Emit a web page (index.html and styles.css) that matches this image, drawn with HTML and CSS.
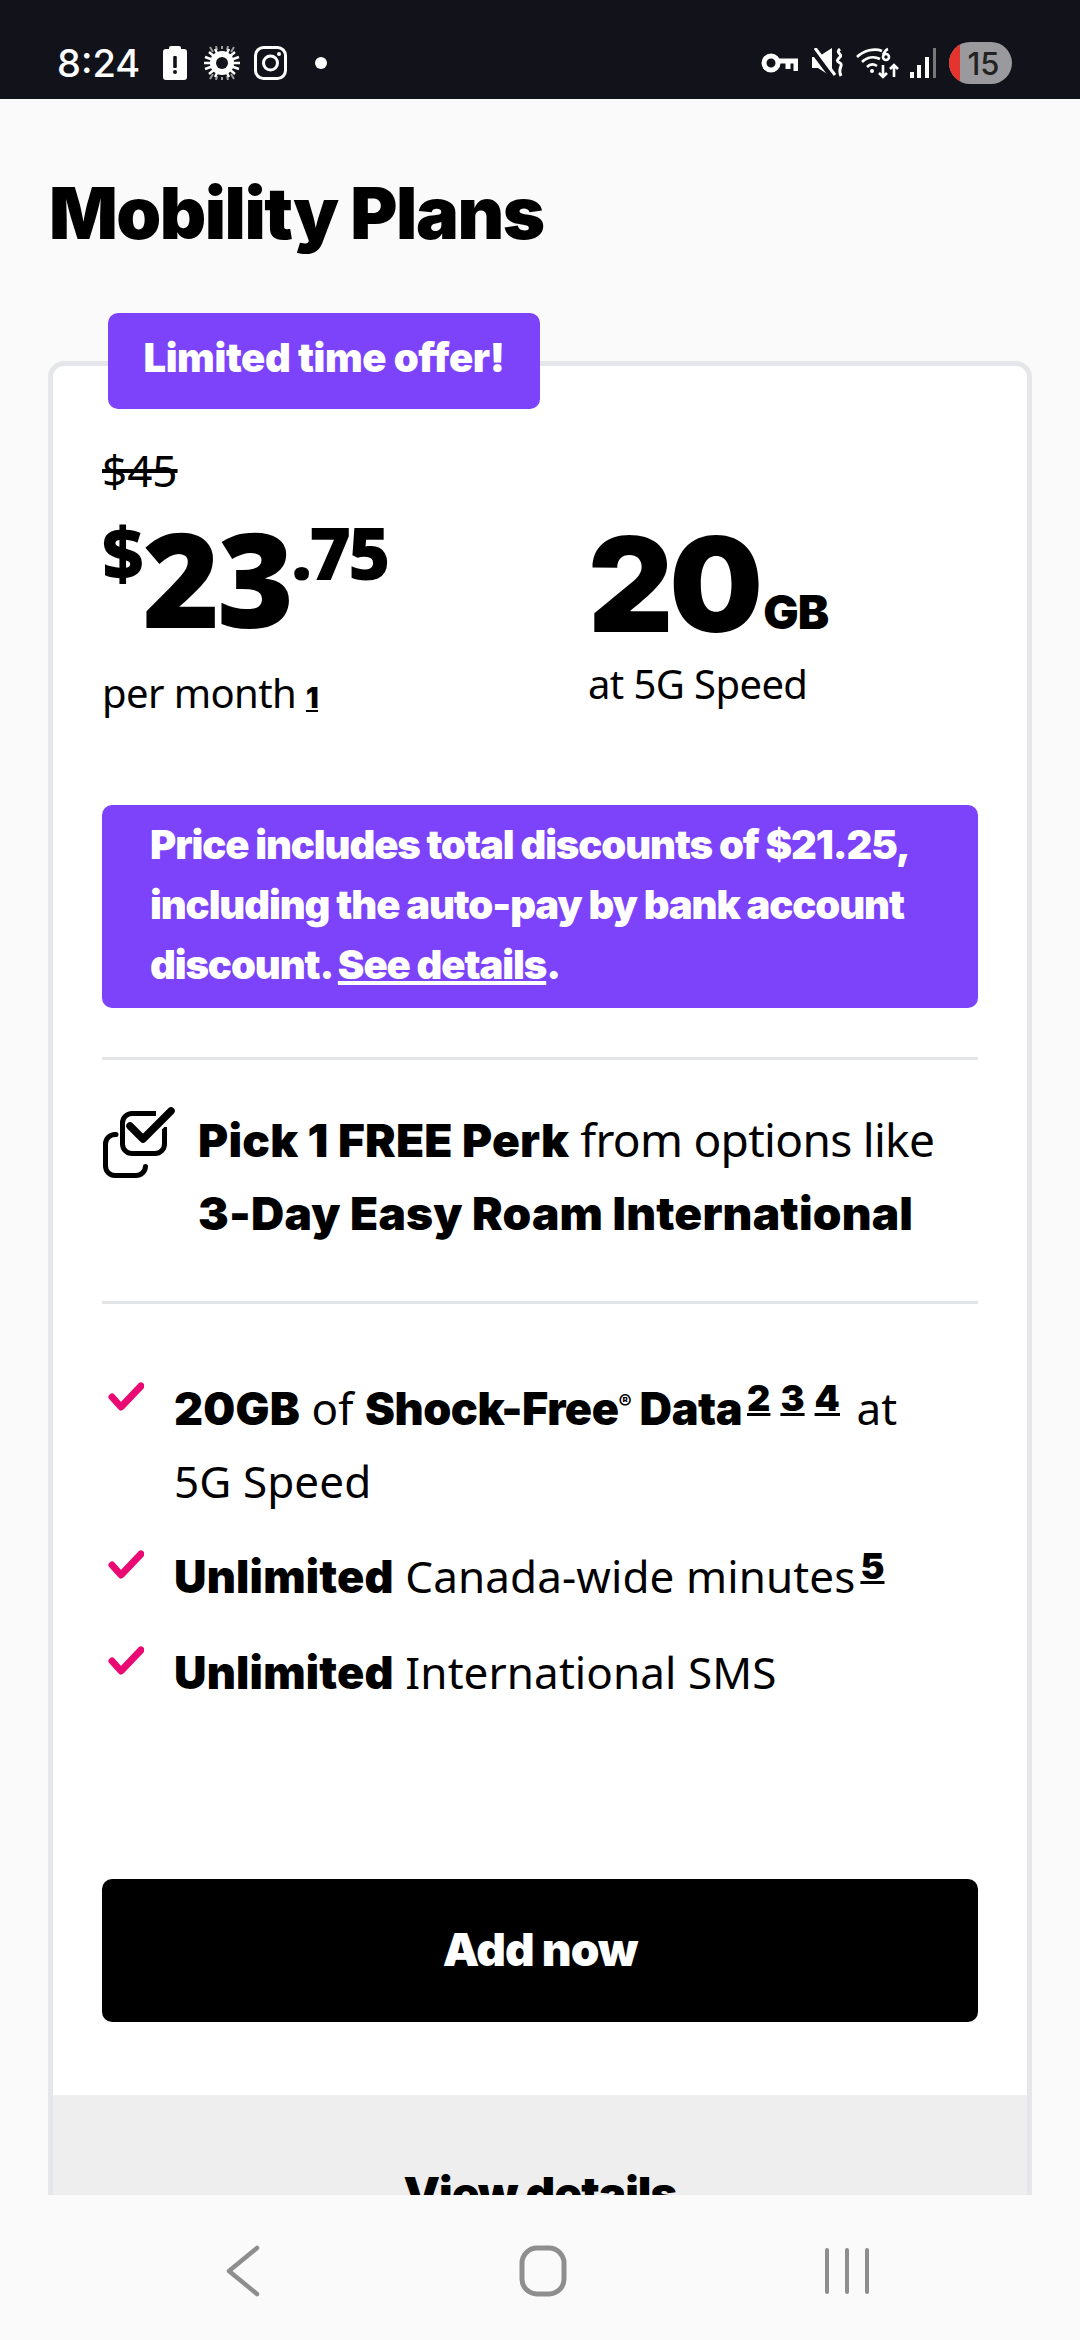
FILE: index.html
```html
<!DOCTYPE html>
<html lang="en">
<head>
    <meta charset="UTF-8">
    <meta name="viewport" content="width=device-width, initial-scale=1.0">
    <title>Mobility Plans</title>
    <link rel="stylesheet" href="styles.css">
</head>
<body>
<div class="screen">
    <div class="status-bar">
        <div class="status-left">
            <span class="clock">8:24</span>
            <svg class="ic-battery" width="24" height="34" viewBox="0 0 24 34"><path fill="#fff" d="M8 0h8a2 2 0 0 1 2 2v1h3a3 3 0 0 1 3 3v25a3 3 0 0 1-3 3H3a3 3 0 0 1-3-3V6a3 3 0 0 1 3-3h3V2a2 2 0 0 1 2-2z"/><rect x="10.2" y="10" width="3.6" height="12" rx="1" fill="#12131a"/><circle cx="12" cy="26" r="2" fill="#12131a"/></svg>
            <svg class="ic-sun" width="36" height="34" viewBox="0 0 36 34">
                <g stroke="#9b9b9b" stroke-width="2"><path d="M6 1l3 5M12 0l1 4M24 0l-1 4M30 1l-3 5M6 33l3-5M12 34l1-4M24 34l-1-4M30 33l-3-5M18 0v3M18 31v3"/></g>
                <g stroke="#fff" stroke-width="2.4"><path d="M0 17h36M1 11l34 12M1 23l34-12M5 6l26 22M5 28l26-22M11 3l14 28M11 31l14-28"/></g>
                <circle cx="18" cy="17" r="12" fill="#fff"/><circle cx="18" cy="17" r="6" fill="#12131a"/>
            </svg>
            <svg class="ic-insta" width="33" height="34" viewBox="0 0 33 34"><rect x="1.5" y="1.5" width="30" height="31" rx="8" fill="none" stroke="#fff" stroke-width="3"/><circle cx="16.5" cy="17" r="7" fill="none" stroke="#fff" stroke-width="3"/><circle cx="25" cy="8" r="2" fill="#fff"/></svg>
            <span class="dot"></span>
        </div>
        <div class="status-right">
            <svg class="ic-key" width="37" height="20" viewBox="0 0 37 20"><path fill="none" stroke="#fff" stroke-width="5" d="M17 8h18v10M27 8v8"/><circle cx="10" cy="10" r="7" fill="none" stroke="#fff" stroke-width="5"/></svg>
            <svg class="ic-mute" width="31" height="30" viewBox="0 0 31 30"><path fill="#fff" d="M0 9h6l14-9v29L6 20H0z"/><path d="M0 2l20 27" stroke="#12131a" stroke-width="5"/><path d="M3 0l20 27" stroke="#fff" stroke-width="3"/><path fill="none" stroke="#fff" stroke-width="3" d="M28 1c-5 4 3 5 0 8s-4 4 0 6-3 5 1 13"/></svg>
            <svg class="ic-wifi" width="44" height="32" viewBox="0 0 44 32"><g fill="none" stroke="#fff" stroke-width="2.600"><path d="M1 10c7-7 18-9 25-6M6 15c5-5 12-6 18-3M11 20c3-3 7-3 10-1"/><path d="M27 8c1-2 2-5 5-6M33 10a3 3 0 1 1-6 0 3 3 0 0 1 6 0z"/><path d="M27 18v12M23 26l4 4 4-4M38 30V18M34 22l4-4 4 4"/></g><circle cx="16" cy="24" r="2" fill="#fff"/></svg>
            <svg class="ic-signal" width="27" height="30" viewBox="0 0 27 30"><rect x="0" y="24" width="4" height="6" fill="#fff"/><rect x="7" y="17" width="4" height="13" fill="#fff"/><rect x="15" y="9" width="4" height="21" fill="#fff"/><rect x="23" y="0" width="3" height="30" fill="#77777a"/></svg>
            <span class="battery-pill"><span class="battery-level"></span><span class="battery-num">15</span></span>
        </div>
    </div>

    <main class="page">
        <h1>Mobility Plans</h1>
        <section class="plan-card">
            <div class="offer-badge">Limited time offer!</div>
            <div class="plan-body">
                <div class="figures">
                    <div class="price-col">
                        <div class="old-price">$45</div>
                        <div class="big-figure price-figure"><span class="currency">$</span>23<span class="cents">.75</span></div>
                        <div class="under-text">per month <a class="note" href="#">1</a></div>
                    </div>
                    <div class="data-col">
                        <div class="big-figure">20<span class="unit">GB</span></div>
                        <div class="under-text">at 5G Speed</div>
                    </div>
                </div>
                <div class="discount-box">
                    Price includes total discounts of $21.25, including the auto-pay by bank account discount. <a href="#">See details</a>.
                </div>
                <div class="perk-row">
                    <svg class="perk-icon" width="74" height="74" viewBox="0 0 74 74">
                        <path fill="none" stroke="#000" stroke-width="5" stroke-linecap="round" d="M14 27.500h-1a9.500 9.500 0 0 0-9.500 9.500v22a9.500 9.500 0 0 0 9.500 9.500h21a9.500 9.500 0 0 0 9.500-9"/>
                        <path fill="none" stroke="#000" stroke-width="5" d="M54 6.500H30a9.500 9.500 0 0 0-9.500 9.500v21a9.500 9.500 0 0 0 9.500 9.500h23a9.500 9.500 0 0 0 9.500-9.500V20"/>
                        <path fill="none" stroke="#fff" stroke-width="14" d="M28 19l13 13 28-29"/>
                        <path fill="none" stroke="#000" stroke-width="7.500" stroke-linecap="round" stroke-linejoin="round" d="M28 19l13 13L69 4"/>
                    </svg>
                    <p class="perk-text"><b>Pick 1 FREE Perk</b> from options like<br><b>3-Day Easy Roam International</b></p>
                </div>
                <ul class="features">
                    <li>
                        <svg class="check" width="36" height="30" viewBox="0 0 36 30"><path fill="none" stroke="#ea0a73" stroke-width="7" stroke-linecap="round" stroke-linejoin="round" d="M4 15l9 10L33 4"/></svg>
                        <span class="feature-text"><b>20GB</b> of <b class="narrow">Shock-Free<sup class="reg">®</sup> Data</b><a class="note sup" href="#">2</a><a class="note sup" href="#">3</a><a class="note sup" href="#">4</a> at 5G Speed</span>
                    </li>
                    <li>
                        <svg class="check" width="36" height="30" viewBox="0 0 36 30"><path fill="none" stroke="#ea0a73" stroke-width="7" stroke-linecap="round" stroke-linejoin="round" d="M4 15l9 10L33 4"/></svg>
                        <span class="feature-text"><b>Unlimited</b> Canada-wide minutes<a class="note sup" href="#">5</a></span>
                    </li>
                    <li>
                        <svg class="check" width="36" height="30" viewBox="0 0 36 30"><path fill="none" stroke="#ea0a73" stroke-width="7" stroke-linecap="round" stroke-linejoin="round" d="M4 15l9 10L33 4"/></svg>
                        <span class="feature-text"><b>Unlimited</b> International SMS</span>
                    </li>
                </ul>
                <button class="add-btn">Add now</button>
            </div>
            <div class="card-footer">View details</div>
        </section>
    </main>

    <nav class="nav-bar">
        <svg width="34" height="52" viewBox="0 0 34 52"><path fill="none" stroke="#8e8e8e" stroke-width="4.500" stroke-linecap="round" stroke-linejoin="round" d="M31 3L3 26l28 23"/></svg>
        <svg width="48" height="52" viewBox="0 0 48 52"><rect x="3" y="3" width="42" height="46" rx="15" fill="none" stroke="#8e8e8e" stroke-width="5"/></svg>
        <svg width="44" height="46" viewBox="0 0 44 46"><path stroke="#8e8e8e" stroke-width="4" stroke-linecap="round" d="M2 2v42M22 2v42M42 2v42"/></svg>
    </nav>
</div>
</body>
</html>
```

FILE: styles.css
```css
html, body {
    margin: 0;
    padding: 0;
    background-color: #fafafa;
    font-family: "Noto Sans", sans-serif;
    color: #000;
}

.screen {
    width: 1080px;
    height: 2340px;
    display: flex;
    flex-direction: column;
    overflow: hidden;
}

/* status bar */
.status-bar {
    height: 99px;
    flex: none;
    background-color: #12131a;
    display: flex;
    justify-content: space-between;
    align-items: center;
    padding: 27px 68px 0 57px;
    box-sizing: border-box;
    color: #fff;
}

.status-left, .status-right {
    display: flex;
    align-items: center;
}

.status-bar svg {
    display: block;
}

.clock {
    font-family: Inter, sans-serif;
    font-size: 38px;
    font-weight: 500;
    width: 106px;
}

.ic-sun {
    margin-left: 17px;
}

.ic-insta {
    margin-left: 14px;
}

.dot {
    width: 12px;
    height: 12px;
    margin-left: 28px;
    border-radius: 50%;
    background-color: #fff;
}

.ic-mute {
    margin-left: 14px;
}

.ic-wifi {
    margin-left: 13px;
}

.ic-signal {
    margin-left: 10px;
}

.battery-pill {
    position: relative;
    margin-left: 12px;
    width: 63px;
    height: 42px;
    border-radius: 21px;
    background-color: #9a9a9e;
    overflow: hidden;
    display: flex;
    align-items: center;
    justify-content: center;
}

.battery-level {
    position: absolute;
    left: 0;
    top: 0;
    bottom: 0;
    width: 11px;
    background-color: #e5332d;
}

.battery-num {
    position: relative;
    font-family: Inter, sans-serif;
    font-size: 31px;
    font-weight: 500;
    color: #222;
    margin-left: 6px;
}

/* page */
.page {
    flex: 1;
    min-height: 0;
    overflow: hidden;
    padding: 0 48px;
}

h1 {
    font-family: Inter, sans-serif;
    font-size: 72px;
    font-weight: 900;
    letter-spacing: -1.5px;
    line-height: 92px;
    margin: 68px 0 0 1px;
}

.plan-card {
    position: relative;
    margin-top: 102px;
    border: 5px solid #e4e6ea;
    border-bottom: 0;
    border-radius: 16px 16px 0 0;
    background-color: #fff;
}

.offer-badge {
    position: absolute;
    left: 55px;
    top: -53px;
    width: 432px;
    height: 96px;
    border-radius: 10px;
    background-color: #7c43fb;
    color: #fff;
    font-family: Inter, sans-serif;
    font-size: 40px;
    font-weight: 900;
    letter-spacing: -0.4px;
    line-height: 90px;
    text-align: center;
}

.plan-body {
    padding: 76px 49px 0 49px;
}

.figures {
    display: flex;
}

.price-col {
    width: 486px;
}

.old-price {
    font-size: 44px;
    line-height: 56px;
    text-decoration: line-through;
}

.big-figure {
    font-family: Inter, sans-serif;
    font-size: 132px;
    font-weight: 900;
    line-height: 132px;
    letter-spacing: -4px;
    margin-top: 13px;
}

.price-figure {
    font-family: "Noto Sans", sans-serif;
    letter-spacing: -3px;
}

.data-col {
    padding-top: 63px;
}

.currency {
    font-size: 72px;
    vertical-align: 48px;
    line-height: 0;
    letter-spacing: -1px;
}

.cents {
    font-size: 72px;
    vertical-align: 48px;
    line-height: 0;
    letter-spacing: -3px;
}

.unit {
    font-size: 47px;
    letter-spacing: -1px;
    margin-left: 4px;
    vertical-align: 3px;
    line-height: 0;
}

.under-text {
    font-size: 40px;
    line-height: 54px;
    margin-top: 23px;
    letter-spacing: -0.6px;
}

.data-col .under-text {
    margin-top: 7px;
}

.note {
    color: #000;
    font-family: Inter, sans-serif;
    font-weight: 900;
    font-size: 28px;
    text-decoration: underline;
}

.discount-box {
    margin-top: 80px;
    padding: 10px 48px 0;
    box-sizing: border-box;
    height: 203px;
    border-radius: 10px;
    background-color: #7c43fb;
    color: #fff;
    font-family: Inter, sans-serif;
    font-size: 40px;
    font-weight: 900;
    letter-spacing: -1.1px;
    line-height: 60px;
}

.discount-box a {
    color: #fff;
}

.perk-row {
    display: flex;
    align-items: flex-start;
    gap: 22px;
    margin-top: 49px;
    height: 247px;
    box-sizing: border-box;
    border-top: 3px solid #e3e5e6;
    border-bottom: 3px solid #e3e5e6;
    padding-top: 43px;
}

.perk-icon {
    flex: none;
    margin-top: 4px;
}

.perk-text {
    margin: 0;
    font-size: 46px;
    line-height: 72px;
    letter-spacing: -0.7px;
}

b {
    font-family: Inter, sans-serif;
    font-weight: 900;
    letter-spacing: 0.2px;
}

.features {
    list-style: none;
    margin: 0;
    padding: 0;
    font-size: 44px;
    line-height: 72px;
    letter-spacing: 0.1px;
}

.features b {
    font-size: 45px;
}

.features b.narrow {
    letter-spacing: -0.5px;
}

.features li {
    display: flex;
    gap: 30px;
    margin-top: 23px;
}

.features li:first-child {
    margin-top: 68px;
}

.feature-text {
    max-width: 760px;
}

.check {
    flex: none;
    margin: 10px 0 0 6px;
}

.reg {
    font-size: 20px;
    line-height: 0;
}

.note.sup {
    font-size: 36px;
    vertical-align: 14px;
    line-height: 0;
    margin-left: 5px;
    margin-right: 5px;
}

.add-btn {
    display: block;
    width: 100%;
    height: 143px;
    margin-top: 170px;
    padding: 0 0 4px;
    border: 0;
    border-radius: 10px;
    background-color: #000;
    color: #fff;
    font-family: Inter, sans-serif;
    font-size: 46px;
    font-weight: 900;
    letter-spacing: -1px;
}

.card-footer {
    margin-top: 73px;
    height: 200px;
    padding-top: 70px;
    box-sizing: border-box;
    background-color: #eeeeee;
    font-family: Inter, sans-serif;
    font-size: 46px;
    font-weight: 900;
    letter-spacing: -1px;
    text-align: center;
}

/* bottom navigation */
.nav-bar {
    position: relative;
    flex: none;
    height: 145px;
    background-color: #fafafa;
    display: flex;
    justify-content: space-between;
    align-items: center;
    padding: 6px 211px 0 226px;
    box-sizing: border-box;
}
```
